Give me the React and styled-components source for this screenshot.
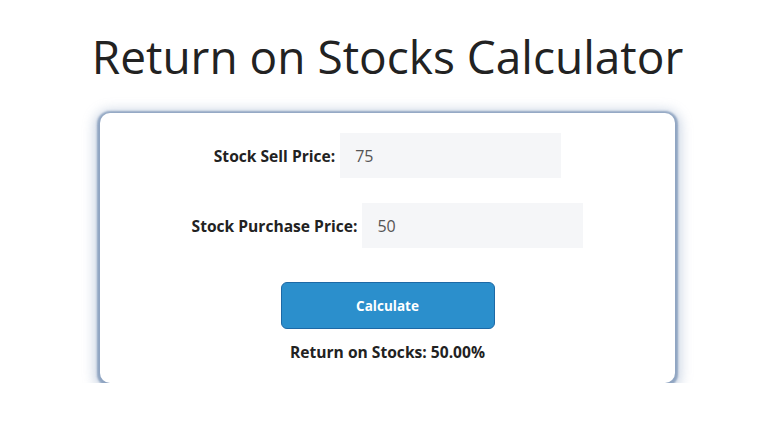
import React, { useState } from 'react'
import styled, { createGlobalStyle } from 'styled-components'

const GlobalStyle = createGlobalStyle`
  body {
    margin: 0;
    background: #ffffff;
    font-family: "Open Sans", "Noto Sans", sans-serif;
  }
`

function App() {
  const [sell, setSell] = useState('75')
  const [buy, setBuy] = useState('50')
  const [result, setResult] = useState('50.00%')

  const calculate = () => {
    const s = parseFloat(sell)
    const b = parseFloat(buy)
    if (!isNaN(s) && !isNaN(b) && b !== 0) {
      setResult((((s - b) / b) * 100).toFixed(2) + '%')
    }
  }

  return (
    <Page>
      <GlobalStyle />
      <Title>Return on Stocks Calculator</Title>
      <Card>
        <Row>
          <Label>Stock Sell Price:</Label>
          <Input value={sell} onChange={e => setSell(e.target.value)} />
        </Row>
        <Row>
          <Label>Stock Purchase Price:</Label>
          <Input value={buy} onChange={e => setBuy(e.target.value)} />
        </Row>
        <Button onClick={calculate}>Calculate</Button>
        <Result>Return on Stocks: {result}</Result>
      </Card>
    </Page>
  )
}

export default App

const Page = styled.div`
  display: flex;
  flex-direction: column;
  align-items: center;
  padding: 22px 0 0 7px;
`

const Title = styled.h1`
  margin: 0 0 23px;
  font-size: 46px;
  font-weight: 400;
  color: #222;
  line-height: 68px;
`

const Card = styled.div`
  width: 575px;
  box-sizing: border-box;
  background: #fff;
  border-radius: 10px;
  box-shadow: 0 1px 2px 3px rgba(120, 145, 180, 0.75),
    0 3px 12px 6px rgba(130, 155, 190, 0.4);
  padding: 20px 0 20px;
  display: flex;
  flex-direction: column;
  align-items: center;
`

const Row = styled.div`
  display: flex;
  align-items: center;
  gap: 5px;
  margin-bottom: 25px;
`

const Label = styled.label`
  font-size: 15.6px;
  font-weight: 700;
  color: #222;
`

const Input = styled.input`
  width: 221px;
  height: 45px;
  box-sizing: border-box;
  border: none;
  outline: none;
  background: #f5f6f8;
  padding: 0 15px;
  font-family: inherit;
  font-size: 16px;
  color: #555;
`

const Button = styled.button`
  margin-top: 9px;
  width: 214px;
  height: 47px;
  background: #2b8fcc;
  border: 1.5px solid #1d69a6;
  border-radius: 6px;
  color: #fff;
  font-family: inherit;
  font-size: 13.5px;
  font-weight: 700;
  cursor: pointer;
`

const Result = styled.div`
  margin-top: 12px;
  font-size: 15.6px;
  font-weight: 700;
  color: #222;
`
